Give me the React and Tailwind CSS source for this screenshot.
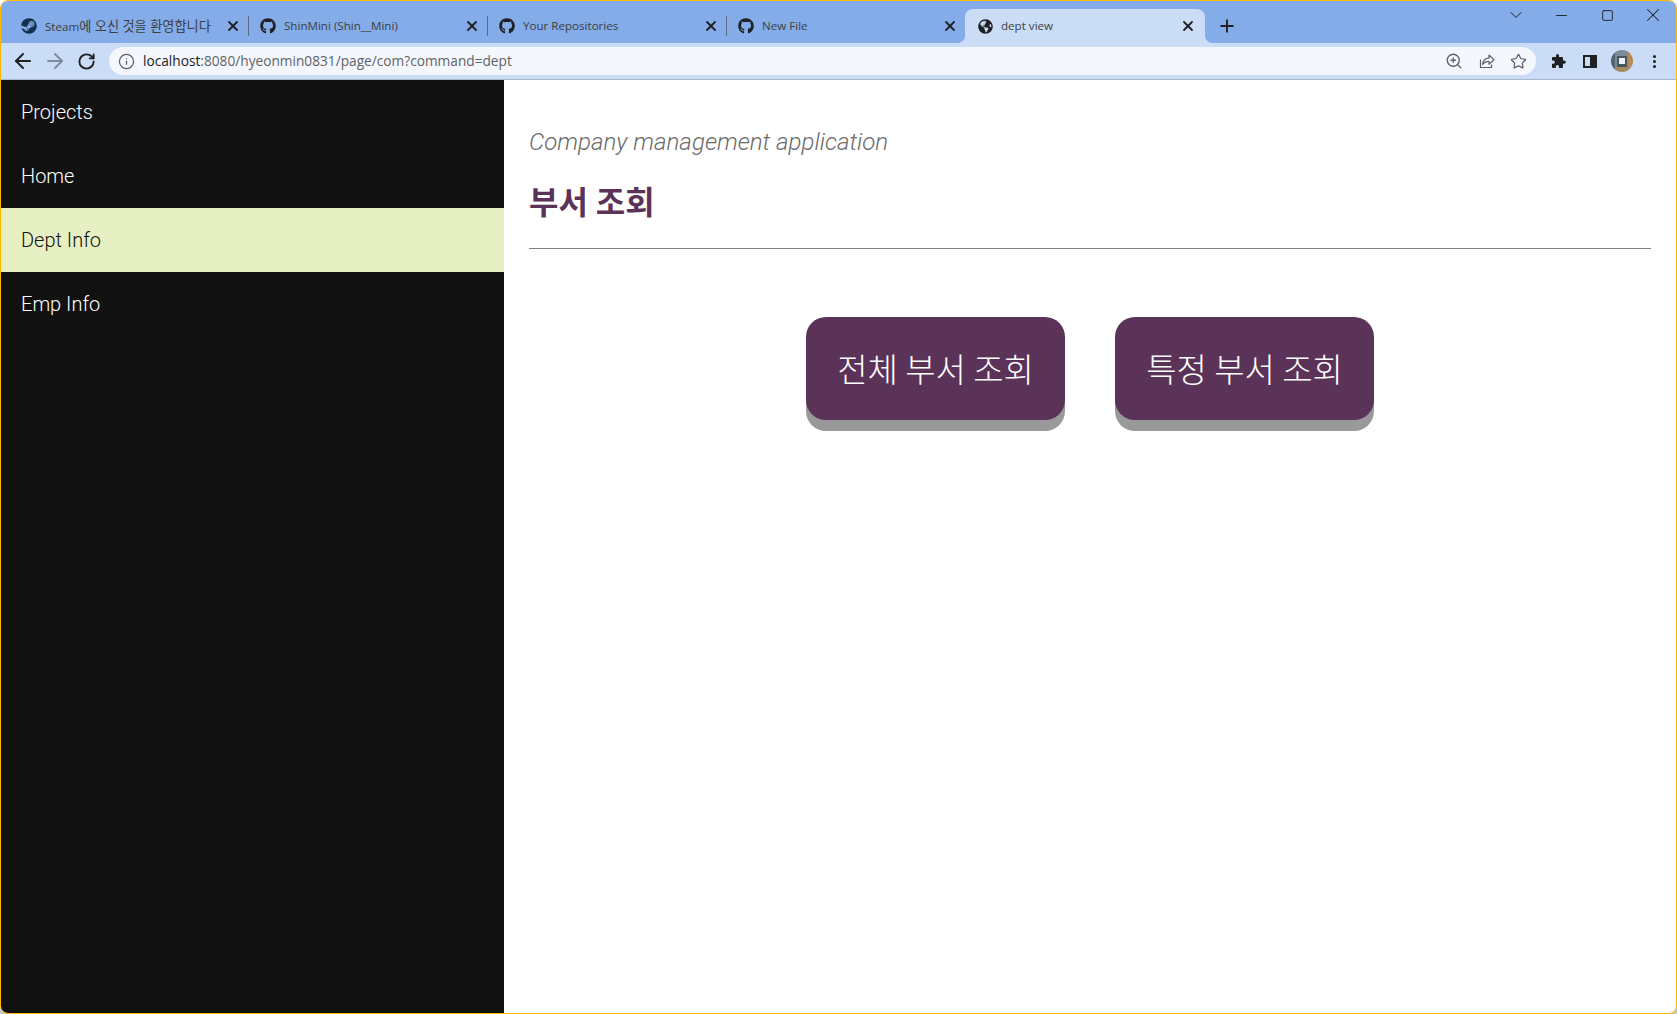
import React from "react";
import { ArrowLeft, ArrowRight, RotateCw, Info, ZoomIn, Star, X, Plus, Minus, Square, ChevronDown } from "lucide-react";
import { FaGithub, FaSteam, FaGlobeAmericas } from "react-icons/fa";

const UI = "font-['Open_Sans','Noto_Sans_CJK_KR',sans-serif]";

function Tab({ icon, title, width, pl, pr, active }) {
  return (
    <div className={`relative h-[34px] shrink-0 flex items-center ${width} ${pl} ${pr} ${active ? "bg-[#cbdcf6] rounded-t-[8px] before:absolute before:bottom-0 before:-left-2 before:w-2 before:h-2 before:bg-[radial-gradient(circle_at_0_0,transparent_8px,#cbdcf6_8px)] after:absolute after:bottom-0 after:-right-2 after:w-2 after:h-2 after:bg-[radial-gradient(circle_at_100%_0,transparent_8px,#cbdcf6_8px)]" : ""}`}>
      <span className="w-4 h-4 flex items-center justify-center shrink-0">{icon}</span>
      <span className="ml-2 flex-1 text-[11.6px] leading-4 text-[#3c4043] whitespace-nowrap overflow-hidden">{title}</span>
      <X size={16} strokeWidth={2.75} className="text-[#202124] shrink-0" />
    </div>
  );
}

const Sep = () => <div className="w-px h-5 bg-[#5d6a80] shrink-0" />;

function NavItem({ label, active }) {
  return (
    <div className={`h-16 flex items-center pl-5 text-[20px] font-light font-['Roboto',sans-serif] ${active ? "bg-[#e7f0c3] text-[#111111]" : "text-white"}`}>
      {label}
    </div>
  );
}

function Btn({ children }) {
  return (
    <button className="w-[259px] h-[103px] rounded-[20px] bg-[#5c3358] text-white text-[33px] font-['Noto_Sans_CJK_KR',sans-serif] font-light shadow-[0_11px_0_#999999]">
      {children}
    </button>
  );
}

export default function App() {
  return (
    <div className="w-[1677px] h-[1014px] bg-[linear-gradient(to_bottom,#ffffff_50%,#c8c8c8_50%)]">
      <div className={`w-full h-full flex flex-col overflow-hidden bg-white border border-[#ffb900] rounded-[8px] ${UI}`}>
        <div className="h-[42px] bg-[#83ace9] flex items-end shrink-0">
          <div className="flex items-center h-[34px]">
            <Tab width="w-[247px]" pl="pl-5" pr="pr-[7px]" icon={<FaSteam size={16} className="text-[#14304f]" />} title={<>Steam<span className="text-[13.2px]">에 오신 것을 환영합니다</span></>} />
            <Sep />
            <Tab width="w-[238px]" pl="pl-[11px]" pr="pr-[7px]" icon={<FaGithub size={16} className="text-[#202124]" />} title="ShinMini (Shin__Mini)" />
            <Sep />
            <Tab width="w-[238px]" pl="pl-[11px]" pr="pr-[7px]" icon={<FaGithub size={16} className="text-[#202124]" />} title="Your Repositories" />
            <Sep />
            <Tab width="w-[238px]" pl="pl-[11px]" pr="pr-[7px]" icon={<FaGithub size={16} className="text-[#202124]" />} title="New File" />
            <Tab active width="w-[240px]" pl="pl-3" pr="pr-[9px]" icon={<FaGlobeAmericas size={15} className="text-[#202124]" />} title="dept view" />
            <Plus size={20} strokeWidth={2.25} className="ml-3 text-[#202124]" />
          </div>
          <div className="ml-auto self-start flex items-center h-[28px] text-[#202124]">
            <ChevronDown size={20} strokeWidth={1.2} className="mr-[27px]" />
            <Minus size={17} strokeWidth={1.3} className="mr-[31px]" />
            <Square size={13} strokeWidth={1.7} className="mr-[28px]" />
            <X size={22} strokeWidth={1.1} className="mr-3" />
          </div>
        </div>
        <div className="h-9 bg-[#cbdcf6] border-b border-[#a9b7cd] flex items-center shrink-0 box-content">
          <ArrowLeft size={24} strokeWidth={2} className="ml-[10px] text-[#202124]" />
          <ArrowRight size={24} strokeWidth={2} className="ml-2 text-[#7f8ba0]" />
          <RotateCw size={19} strokeWidth={2.4} className="ml-[10px] text-[#202124]" />
          <div className="ml-[13px] w-[1427px] h-7 rounded-full bg-[#f4f7fc] flex items-center pl-[9px] pr-[9px]">
            <Info size={17} strokeWidth={1.8} className="text-[#5f6368]" />
            <span className="ml-2 text-[13.7px] text-[#5f6368] whitespace-nowrap"><span className="text-[#202124]">localhost</span>:8080/hyeonmin0831/page/com?command=dept</span>
            <div className="ml-auto flex items-center text-[#5f6368]">
              <ZoomIn size={18} strokeWidth={1.75} />
              <svg width="16" height="16" viewBox="0 0 16 16" fill="none" stroke="currentColor" strokeWidth="1.2" strokeLinejoin="round" className="ml-4">
                <path d="M1.5 6.5V14.5H12.5V11.5" />
                <path d="M3.5 11.5C4 7.5 6.8 5.2 10 5.2V2L15 6.8L10 11.2V8.3C7.5 8.3 5 9.3 3.5 11.5Z" />
              </svg>
              <Star size={17} strokeWidth={1.75} className="ml-[15px]" />
            </div>
          </div>
          <svg width="16" height="16" viewBox="0 0 16 16" fill="#202124" className="ml-[14px]">
            <path d="M6 2.5a1.5 1.5 0 0 1 3 0V4h3a1 1 0 0 1 1 1v2.5h1.2a1.6 1.6 0 0 1 0 3.2H13V14a1 1 0 0 1-1 1H9v-1.3a1.6 1.6 0 0 0-3.2 0V15H3a1 1 0 0 1-1-1v-3.2h1.2a1.6 1.6 0 0 0 0-3.2H2V5a1 1 0 0 1 1-1h3z" />
          </svg>
          <div className="ml-[17px] w-[14px] h-[13px] border-2 border-[#202124] flex justify-end"><div className="w-[5px] bg-[#202124]" /></div>
          <div className="ml-[14px] w-[22px] h-[22px] rounded-full overflow-hidden shrink-0">
            <svg width="22" height="22" viewBox="0 0 22 22" className="blur-[0.7px]">
              <rect width="22" height="22" fill="#7d8b98" />
              <rect x="17" width="5" height="22" fill="#b48a58" />
              <rect y="17" width="22" height="5" fill="#a58a64" />
              <rect width="4" height="22" fill="#54636f" />
              <rect x="6" y="6" width="10" height="11" fill="#4a555f" />
              <rect x="8" y="8" width="6" height="6" fill="#eef1f3" />
            </svg>
          </div>
          <div className="ml-5 flex flex-col gap-[2px]">
            <span className="w-[3px] h-[3px] rounded-full bg-[#202124]" />
            <span className="w-[3px] h-[3px] rounded-full bg-[#202124]" />
            <span className="w-[3px] h-[3px] rounded-full bg-[#202124]" />
          </div>
        </div>
        <div className="flex-1 flex min-h-0">
          <nav className="w-[503px] bg-[#111111] shrink-0">
            <NavItem label="Projects" />
            <NavItem label="Home" />
            <NavItem label="Dept Info" active />
            <NavItem label="Emp Info" />
          </nav>
          <main className="flex-1 pl-[25px] pr-[25px] font-['Roboto','Noto_Sans_CJK_KR',sans-serif]">
            <p className="mt-[48px] text-[24.1px] leading-7 italic font-light text-[#6b6b6b]">Company management application</p>
            <h2 className="mt-[27px] text-[32px] leading-10 font-bold text-[#5c3358]">부서 조회</h2>
            <hr className="mt-[25px] border-[#808080]" />
            <div className="mt-[68px] flex justify-center gap-[50px]">
              <Btn>전체 부서 조회</Btn>
              <Btn>특정 부서 조회</Btn>
            </div>
          </main>
        </div>
      </div>
    </div>
  );
}
